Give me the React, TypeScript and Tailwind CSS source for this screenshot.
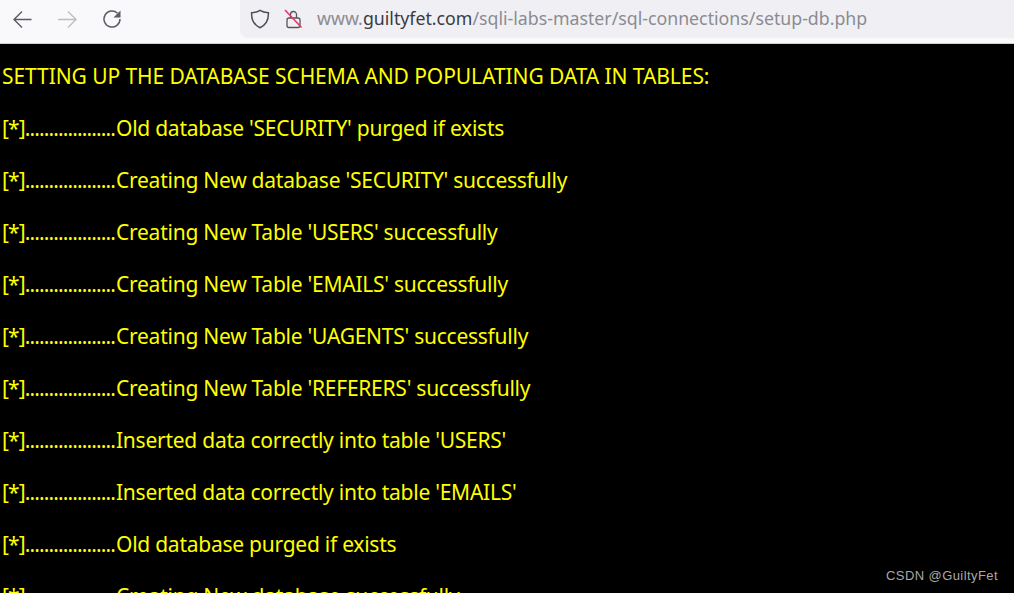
import React from "react";

const lines = [
  "Old database 'SECURITY' purged if exists",
  "Creating New database 'SECURITY' successfully",
  "Creating New Table 'USERS' successfully",
  "Creating New Table 'EMAILS' successfully",
  "Creating New Table 'UAGENTS' successfully",
  "Creating New Table 'REFERERS' successfully",
  "Inserted data correctly into table 'USERS'",
  "Inserted data correctly into table 'EMAILS'",
  "Old database purged if exists",
  "Creating New database successfully",
];

function Line({ text }: { text: string }) {
  return (
    <div className="h-[26px] leading-[26px] whitespace-nowrap flex">
      <span className="w-[114px] shrink-0 tracking-[-0.88px]">[*]...................</span>
      <span className="tracking-[-0.25px]">{text}</span>
    </div>
  );
}

export default function App() {
  return (
    <div className="w-[1014px] h-[593px] overflow-hidden bg-black relative font-['Noto_Sans','Open_Sans',sans-serif]">
      <header className="h-[44px] bg-[#f9f9fb] border-b border-[#cfcfd4] flex items-start">
        <div className="w-[240px] h-[38px] flex items-center pl-[12px] gap-[24px] shrink-0">
          <svg width="21" height="21" viewBox="0 0 21 21" fill="none" stroke="#5b5b66" strokeWidth="1.4">
            <path d="M19.500 10.500H2M10 2.500l-8 8 8 8" />
          </svg>
          <svg width="21" height="21" viewBox="0 0 21 21" fill="none" stroke="#bdbdc3" strokeWidth="1.4">
            <path d="M1 10.500h18M11 2.500l8 8-8 8" />
          </svg>
          <svg width="20" height="20" viewBox="0 0 20 20" fill="none" stroke="#5b5b66" strokeWidth="1.5">
            <path d="M15.500 4.200A8 8 0 1 0 18 10" />
            <path d="M18.500 1.500v7h-7z" fill="#5b5b66" stroke="none" />
          </svg>
        </div>
        <div className="flex-1 h-[38px] bg-[#f0f0f4] rounded-bl-[8px] flex items-center pl-[10px]">
          <svg width="20" height="20" viewBox="0 0 20 20" fill="none" stroke="#4e4e58" strokeWidth="1.5">
            <path d="M10 1.300c2.500 1.600 5 2.200 8.400 2.400.3 7-1.800 12-8.400 15-6.600-3-8.700-8-8.400-15C5 3.500 7.500 2.900 10 1.300z" />
          </svg>
          <svg width="20" height="20" viewBox="0 0 20 20" fill="none" className="ml-[14px]">
            <rect x="3" y="9" width="13" height="9.500" rx="2" stroke="#55555f" strokeWidth="1.3" />
            <path d="M6.500 9V5.500a3 3 0 0 1 6 0V9" stroke="#55555f" strokeWidth="1.300" />
            <path d="M1 1l16.500 17.500" stroke="#f0345f" strokeWidth="1.600" />
          </svg>
          <div className="ml-[13px] mb-[2px] text-[17.74px] leading-[24px] whitespace-nowrap text-[#8b8b92]">
            www.<span className="text-[#3a3a42]">guiltyfet.com</span>/sqli-labs-master/sql-connections/setup-db.php
          </div>
        </div>
      </header>
      <main className="bg-black text-[#ffff00] text-[21px] pl-[2px] pt-[19px] flex flex-col gap-[26px]">
        <div className="h-[26px] leading-[26px] whitespace-nowrap tracking-[-0.08px]">SETTING UP THE DATABASE SCHEMA AND POPULATING DATA IN TABLES:</div>
        {lines.map((t) => (
          <Line key={t} text={t} />
        ))}
      </main>
      <div className="absolute left-[886px] top-[566px] text-[13px] leading-[20px] text-[#a8a8a8] font-['Liberation_Sans',sans-serif] tracking-[0.42px] whitespace-nowrap">
        CSDN @GuiltyFet
      </div>
    </div>
  );
}
